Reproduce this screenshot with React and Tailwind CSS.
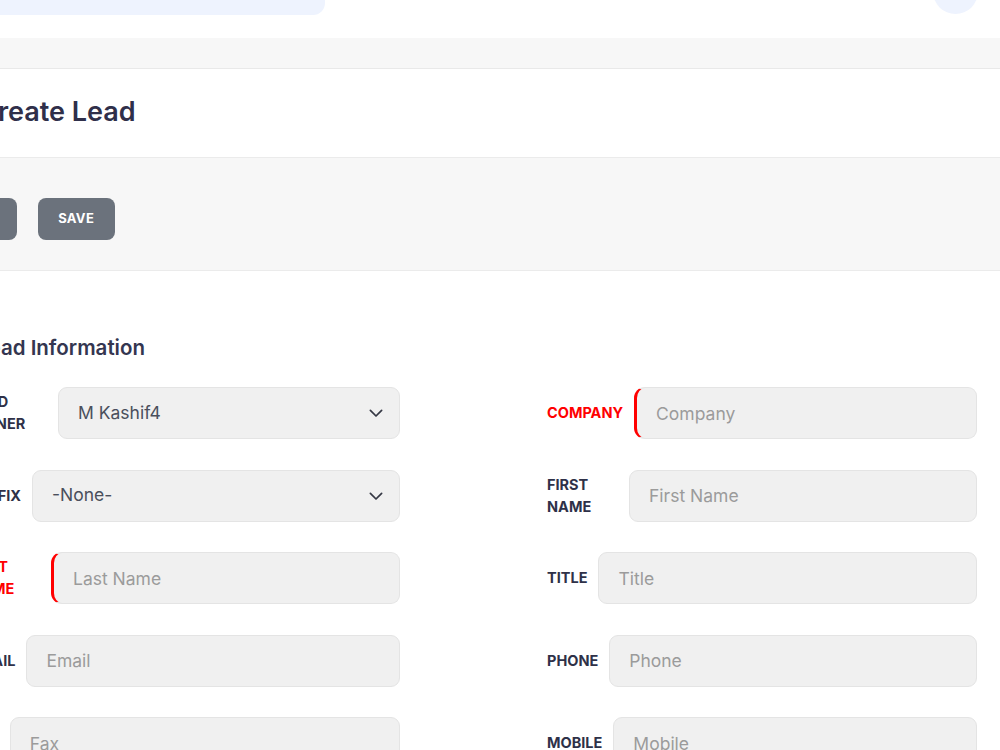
import React from 'react';

const leftFields = [
    { label: 'Lead Owner', type: 'select', value: 'M Kashif4', width: 'w-[77px]' },
    { label: 'Prefix', type: 'select', value: '-None-' },
    { label: 'Last Name', placeholder: 'Last Name', required: true, width: 'w-[70px]' },
    { label: 'Email', placeholder: 'Email' },
    { label: 'Fax', placeholder: 'Fax' },
];

const rightFields = [
    { label: 'Company', placeholder: 'Company', required: true },
    { label: 'First Name', placeholder: 'First Name', width: 'w-[71px]' },
    { label: 'Title', placeholder: 'Title' },
    { label: 'Phone', placeholder: 'Phone' },
    { label: 'Mobile', placeholder: 'Mobile' },
];

const Chevron = () => (
    <svg width="18" height="18" viewBox="0 0 24 24" fill="none" stroke="#353844" strokeWidth="2.3" strokeLinecap="round" strokeLinejoin="round">
        <path d="M4.5 8.5l7.5 7.5 7.5-7.5" />
    </svg>
);

const Field = ({ field }) => {
    const labelColor = field.required ? 'text-[#ff0000]' : 'text-[#2e3148]';
    return (
        <div className="flex items-center gap-[11px]">
            <label className={`shrink-0 text-[14.5px] font-bold uppercase leading-[22px] ${labelColor} ${field.width || ''}`}>
                {field.label}
            </label>
            {field.type === 'select' ? (
                <div className="flex-1 h-[52px] flex items-center justify-between pl-[19px] pr-[14px] rounded-[9px] border border-[#e4e4e4] bg-[#f0f0f0] text-[17.5px] text-[#4a4f5c]">
                    <span>{field.value}</span>
                    <Chevron />
                </div>
            ) : (
                <input
                    type="text"
                    placeholder={field.placeholder}
                    className={`flex-1 min-w-0 h-[52px] pl-[19px] rounded-[9px] border border-[#e4e4e4] bg-[#f0f0f0] text-[17.5px] text-[#4a4f5c] placeholder:text-[#9b9b9b] outline-none ${field.required ? 'border-l-[3px] border-l-[#ff0000] rounded-l-[11px]' : ''}`}
                />
            )}
        </div>
    );
};

export default function App() {
    return (
        <div className="w-[1000px] h-[750px] overflow-hidden bg-white font-['Inter',sans-serif]">
            {/* Top bar */}
            <header className="h-[38px] flex items-start justify-between">
                <div className="-mt-[30px] -ml-[20px] w-[345px] h-[45px] rounded-[12px] bg-[#eef3fe]" />
                <div className="-mt-[31px] mr-[22px] w-[45px] h-[45px] rounded-full bg-[#eef3fe]" />
            </header>
            <div className="h-[31px] bg-[#f7f7f7] border-b border-[#e9e9e9]" />

            {/* Title */}
            <div className="h-[88px] flex items-center">
                <h1 className="-ml-[22px] -mt-[1px] text-[27px] font-semibold text-[#2f2f4a]">Create Lead</h1>
            </div>

            {/* Actions */}
            <div className="h-[114px] bg-[#f7f7f7] border-y border-[#ebebeb] flex items-start pt-[40px] gap-[21px] -ml-[81px]">
                <button className="h-[42px] px-[21px] rounded-[8px] bg-[#6b727c] text-white text-[13px] font-bold uppercase tracking-wide">Cancel</button>
                <button className="h-[42px] px-[20.5px] rounded-[8px] bg-[#6b727c] text-white text-[13px] font-bold uppercase tracking-wide">Save</button>
            </div>

            {/* Form */}
            <section className="pt-[63px]">
                <h2 className="-ml-[23px] text-[20.5px] leading-[28px] font-semibold text-[#343650]">Lead Information</h2>
                <div className="mt-[25px] -ml-[30px] grid grid-cols-[430px_430px] gap-x-[147px]">
                    <div className="flex flex-col gap-y-[30.5px]">
                        {leftFields.map(f => <Field key={f.label} field={f} />)}
                    </div>
                    <div className="flex flex-col gap-y-[30.5px]">
                        {rightFields.map(f => <Field key={f.label} field={f} />)}
                    </div>
                </div>
            </section>
        </div>
    );
}
